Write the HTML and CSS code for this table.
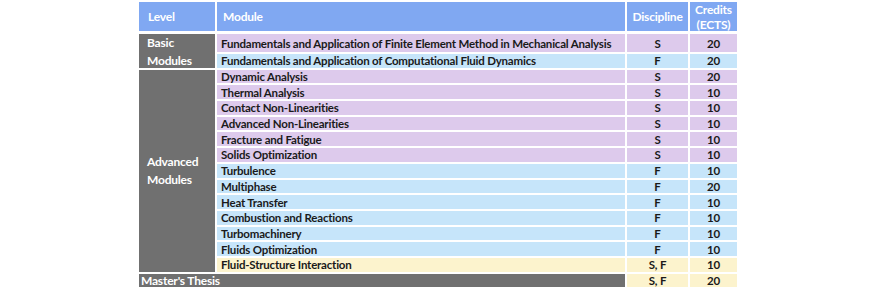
FILE: index.html
```html
<!DOCTYPE html>
<html>
<head>
<meta charset="utf-8">
<link rel="stylesheet" href="styles.css">
</head>
<body>
<div class="table">
  <div class="h h-level">Level</div>
  <div class="h h-module">Module</div>
  <div class="h h-center">Discipline</div>
  <div class="h h-center h-credits">Credits<br>(ECTS)</div>

  <div class="level basic">Basic<br>Modules</div>
  <div class="mod s tall">Fundamentals and Application of Finite Element Method in Mechanical Analysis</div>
  <div class="c s tall">S</div>
  <div class="c s tall">20</div>
  <div class="mod f">Fundamentals and Application of Computational Fluid Dynamics</div>
  <div class="c f">F</div>
  <div class="c f">20</div>

  <div class="level advanced">Advanced<br>Modules</div>
  <div class="mod s">Dynamic Analysis</div><div class="c s">S</div><div class="c s">20</div>
  <div class="mod s">Thermal Analysis</div><div class="c s">S</div><div class="c s">10</div>
  <div class="mod s">Contact Non-Linearities</div><div class="c s">S</div><div class="c s">10</div>
  <div class="mod s">Advanced Non-Linearities</div><div class="c s">S</div><div class="c s">10</div>
  <div class="mod s">Fracture and Fatigue</div><div class="c s">S</div><div class="c s">10</div>
  <div class="mod s">Solids Optimization</div><div class="c s">S</div><div class="c s">10</div>
  <div class="mod f">Turbulence</div><div class="c f">F</div><div class="c f">10</div>
  <div class="mod f">Multiphase</div><div class="c f">F</div><div class="c f">20</div>
  <div class="mod f">Heat Transfer</div><div class="c f">F</div><div class="c f">10</div>
  <div class="mod f">Combustion and Reactions</div><div class="c f">F</div><div class="c f">10</div>
  <div class="mod f">Turbomachinery</div><div class="c f">F</div><div class="c f">10</div>
  <div class="mod f">Fluids Optimization</div><div class="c f">F</div><div class="c f">10</div>
  <div class="mod y">Fluid-Structure Interaction</div><div class="c y">S, F</div><div class="c y">10</div>

  <div class="thesis">Master's Thesis</div>
  <div class="c y">S, F</div><div class="c y">20</div>
</div>
</body>
</html>
```
FILE: styles.css
```css
html, body {
  margin: 0;
  padding: 0;
  background: #ffffff;
}
body {
  padding: 2px 0 0 139px;
  font-family: "Lato", "Open Sans", sans-serif;
  font-weight: 700;
  font-size: 11.5px;
  letter-spacing: -0.2px;
  color: #1a1a1a;
}
.table {
  display: grid;
  grid-template-columns: 76px 408px 61px 47px;
  grid-template-rows: 30px 18px 13.7px repeat(14, 13.7px);
  column-gap: 2px;
  row-gap: 2px;
}
.h {
  background: #80a8f2;
  color: #ffffff;
  display: flex;
  align-items: center;
  font-size: 12px;
  margin-bottom: 1px;
}
.h-level { padding-left: 9px; }
.h-module { padding-left: 6px; }
.h-center { justify-content: center; text-align: center; }
.h-credits { line-height: 15px; }
.level {
  background: #707070;
  color: #ffffff;
  font-size: 12px;
  padding-left: 8px;
  display: flex;
  align-items: center;
  line-height: 18px;
}
.basic { grid-row: 2 / span 2; padding-top: 2px; }
.advanced { grid-row: 4 / span 13; }
.mod {
  padding-left: 4px;
  display: flex;
  align-items: center;
  white-space: nowrap;
}
.c {
  display: flex;
  align-items: center;
  justify-content: center;
}
.s { background: #ddcaec; }
.f { background: #c6e5fa; }
.y { background: #fcf3cd; }
.thesis {
  grid-column: 1 / span 2;
  background: #707070;
  color: #ffffff;
  font-size: 12px;
  padding-left: 2px;
  display: flex;
  align-items: center;
}
```
